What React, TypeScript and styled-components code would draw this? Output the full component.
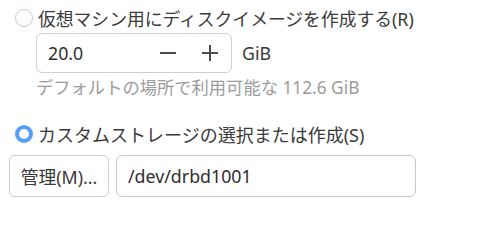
import React from "react";
import styled, { createGlobalStyle } from "styled-components";

const Global = createGlobalStyle`
  html, body { margin: 0; padding: 0; background: #ffffff; }
  body {
    font-family: "Noto Sans", "Noto Sans CJK JP", sans-serif;
    font-size: 17.8px;
    color: #3a3a3a;
    -webkit-font-smoothing: antialiased;
  }
`;

const Page = styled.div`
  width: 482px;
  height: 231px;
  display: flex;
  flex-direction: column;
  padding: 6px 0 0 9px;
  box-sizing: border-box;
`;

const RadioRow = styled.label<{ $top: number }>`
  display: flex;
  align-items: center;
  height: 24px;
  margin-top: ${(p) => p.$top}px;
  margin-left: 6px;
  gap: 5px;
  white-space: nowrap;
`;

const RadioCircle = styled.span<{ $checked?: boolean }>`
  width: 18px;
  height: 18px;
  box-sizing: border-box;
  border-radius: 50%;
  flex: none;
  background: #ffffff;
  border: ${(p) => (p.$checked ? "4.5px solid #55a0f6" : "1px solid #d3c6cc")};
`;

const LabelText = styled.span<{ $size?: number }>`
  line-height: 24px;
  position: relative;
  top: 1px;
  ${(p) => (p.$size ? `font-size: ${p.$size}px;` : "")}
`;

const SpinRow = styled.div`
  display: flex;
  align-items: center;
  margin-top: 3px;
  margin-left: 27px;
  gap: 10px;
`;

const SpinBox = styled.div`
  width: 196px;
  height: 40px;
  box-sizing: border-box;
  border: 1px solid #cfcfcf;
  border-radius: 6px;
  display: flex;
  align-items: center;
  padding-left: 11px;
`;

const SpinValue = styled.span`
  flex: 1;
  color: #2e2e2e;
`;

const SpinButton = styled.span`
  width: 42px;
  height: 38px;
  display: flex;
  align-items: center;
  justify-content: center;
`;

const Unit = styled.span`
  color: #3a3a3a;
`;

const Hint = styled.div`
  margin-top: 4px;
  margin-left: 27px;
  height: 22px;
  line-height: 22px;
  font-size: 17.3px;
  color: #9b9b9b;
  white-space: nowrap;
`;

const ActionRow = styled.div`
  display: flex;
  gap: 7px;
  margin-top: 9px;
`;

const Button = styled.button`
  width: 100px;
  height: 42px;
  box-sizing: border-box;
  border: 1px solid #cdcdcd;
  border-radius: 6px;
  background: #ffffff;
  font: inherit;
  color: #3a3a3a;
  padding: 0;
  white-space: nowrap;
`;

const Field = styled.div`
  width: 300px;
  height: 42px;
  box-sizing: border-box;
  border: 1px solid #c9c9c9;
  border-radius: 6px;
  display: flex;
  align-items: center;
  padding-left: 11px;
  color: #2e2e2e;
`;

const Minus = () => (
  <svg width="18" height="18" viewBox="0 0 18 18">
    <path d="M1 9h16" stroke="#4a4a4a" strokeWidth="2" />
  </svg>
);

const Plus = () => (
  <svg width="18" height="18" viewBox="0 0 18 18">
    <path d="M1 9h16M9 1v16" stroke="#4a4a4a" strokeWidth="2" />
  </svg>
);

export default function App() {
  return (
    <>
      <Global />
      <Page>
        <RadioRow $top={0}>
          <RadioCircle />
          <LabelText>仮想マシン用にディスクイメージを作成する(R)</LabelText>
        </RadioRow>
        <SpinRow>
          <SpinBox>
            <SpinValue>20.0</SpinValue>
            <SpinButton>
              <Minus />
            </SpinButton>
            <SpinButton>
              <Plus />
            </SpinButton>
          </SpinBox>
          <Unit>GiB</Unit>
        </SpinRow>
        <Hint>デフォルトの場所で利用可能な 112.6 GiB</Hint>
        <RadioRow $top={23}>
          <RadioCircle $checked />
          <LabelText $size={18}>カスタムストレージの選択または作成(S)</LabelText>
        </RadioRow>
        <ActionRow>
          <Button>管理(M)...</Button>
          <Field>/dev/drbd1001</Field>
        </ActionRow>
      </Page>
    </>
  );
}
